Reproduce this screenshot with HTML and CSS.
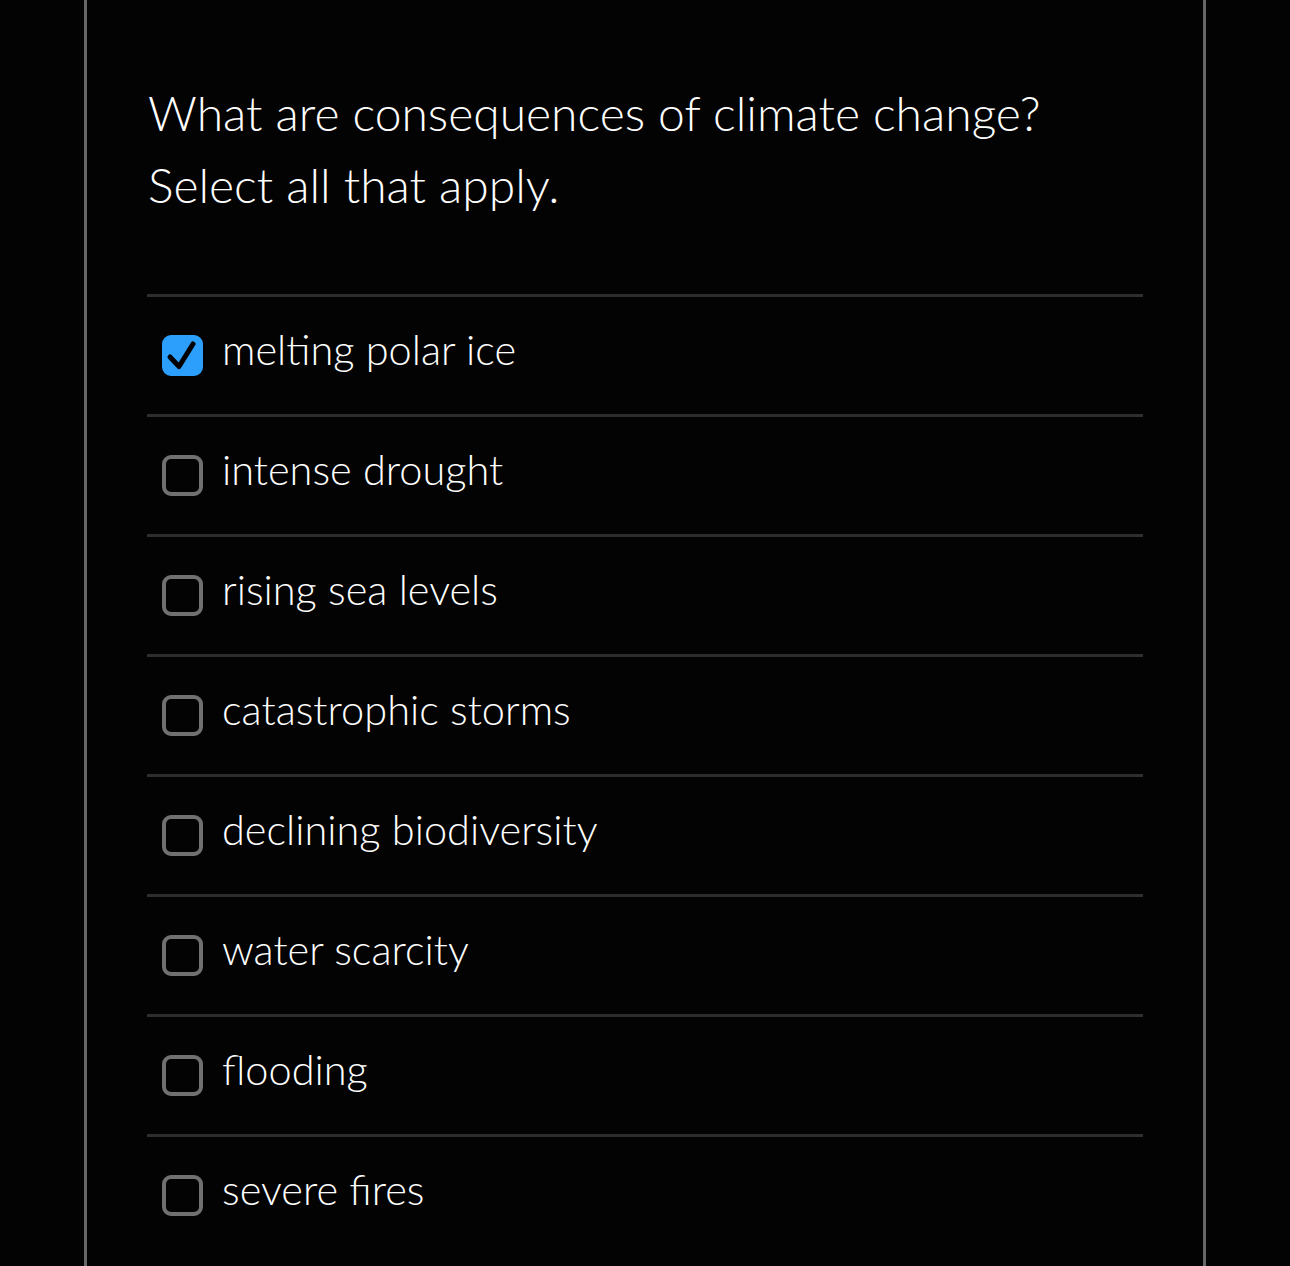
FILE: index.html
```html
<!DOCTYPE html>
<html>
<head>
<meta charset="utf-8">
<link rel="stylesheet" href="styles.css">
</head>
<body>
<div class="frame">
  <div class="question">What are consequences of climate change?<br>Select all that apply.</div>
  <ul class="options">
    <li class="option">
      <span class="box checked"><svg viewBox="0 0 42 42" width="42" height="42"><path d="M8 22 L17 31.5 L31 9" fill="none" stroke="#000" stroke-width="5" stroke-linecap="round" stroke-linejoin="round"/></svg></span>
      <span class="label">melting polar ice</span>
    </li>
    <li class="option"><span class="box"></span><span class="label">intense drought</span></li>
    <li class="option"><span class="box"></span><span class="label">rising sea levels</span></li>
    <li class="option"><span class="box"></span><span class="label">catastrophic storms</span></li>
    <li class="option"><span class="box"></span><span class="label">declining biodiversity</span></li>
    <li class="option"><span class="box"></span><span class="label">water scarcity</span></li>
    <li class="option"><span class="box"></span><span class="label">flooding</span></li>
    <li class="option"><span class="box"></span><span class="label">severe fires</span></li>
  </ul>
</div>
</body>
</html>
```
FILE: styles.css
```css
html, body {
  margin: 0;
  padding: 0;
  background: #030303;
  overflow: hidden;
}
body {
  font-family: Lato, "Noto Sans", sans-serif;
  font-weight: 300;
  color: #ffffff;
}
.frame {
  margin-left: 84px;
  width: 1122px;
  height: 1266px;
  border-left: 3px solid #666666;
  border-right: 3px solid #666666;
  padding: 77px 60px 0 60px;
  box-sizing: border-box;
  overflow: hidden;
}
.question {
  font-size: 48px;
  line-height: 72px;
  padding-left: 1px;
  margin-bottom: 73px;
}
.options {
  list-style: none;
  margin: 0;
  padding: 0;
  width: 996px;
}
.option {
  display: flex;
  align-items: center;
  height: 117px;
  border-top: 3px solid #2e2e2e;
  padding-left: 15px;
}
.box {
  width: 33px;
  height: 33px;
  border: 4.5px solid #707070;
  border-radius: 9px;
  flex: none;
  margin-right: 19px;
  position: relative;
}
.box.checked {
  border-color: #2c9ffd;
  background: #2c9ffd;
}
.box svg {
  position: absolute;
  left: -4.5px;
  top: -4.5px;
}
.label {
  font-size: 41.5px;
  line-height: 42px;
  margin-top: -14px;
}
```
